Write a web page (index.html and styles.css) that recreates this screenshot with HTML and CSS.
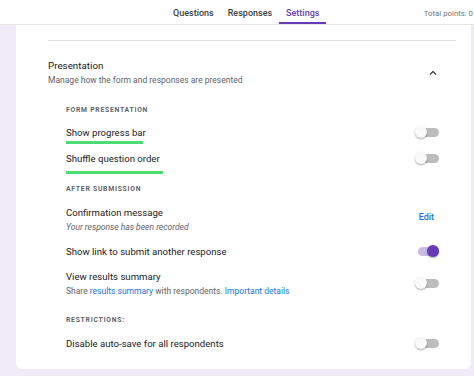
FILE: index.html
```html
<!DOCTYPE html>
<html lang="en">
<head>
    <meta charset="UTF-8">
    <meta name="viewport" content="width=device-width, initial-scale=1.0">
    <title>Form Settings</title>
    <link rel="stylesheet" href="styles.css">
</head>
<body>
    <header class="topbar">
        <nav class="tabs">
            <a class="tab">Questions</a>
            <a class="tab">Responses</a>
            <a class="tab active">Settings</a>
        </nav>
        <span class="points">Total points: 0</span>
    </header>

    <main class="page">
        <div class="card">
            <div class="divider"></div>

            <div class="section-head">
                <div>
                    <div class="section-title">Presentation</div>
                    <div class="section-sub">Manage how the form and responses are presented</div>
                </div>
                <svg class="chevron" viewBox="0 0 24 24" width="14" height="14">
                    <path d="M7.41 15.41L12 10.83l4.59 4.58L18 14l-6-6-6 6z" fill="#202124"/>
                </svg>
            </div>

            <div class="group">
                <div class="group-label first">FORM PRESENTATION</div>
                <div class="row progress-row">
                    <span class="mark mark-1">Show progress bar</span>
                    <span class="switch"></span>
                </div>
                <div class="row">
                    <span class="mark mark-2">Shuffle question order</span>
                    <span class="switch"></span>
                </div>

                <div class="group-label after">AFTER SUBMISSION</div>
                <div class="row tall confirm">
                    <div>
                        <div class="row-title">Confirmation message</div>
                        <div class="row-note italic">Your response has been recorded</div>
                    </div>
                    <a class="edit">Edit</a>
                </div>
                <div class="row link-row">
                    <span>Show link to submit another response</span>
                    <span class="switch on"></span>
                </div>
                <div class="row tall summary">
                    <div>
                        <div class="row-title">View results summary</div>
                        <div class="row-note">Share <a class="link">results summary</a> with respondents. <a class="link">Important details</a></div>
                    </div>
                    <span class="switch"></span>
                </div>

                <div class="group-label restrict">RESTRICTIONS:</div>
                <div class="row last">
                    <span>Disable auto-save for all respondents</span>
                    <span class="switch"></span>
                </div>
            </div>
        </div>
    </main>
</body>
</html>
```

FILE: styles.css
```css
body {
    margin: 0;
    font-family: Roboto, "Liberation Sans", Arial, sans-serif;
    background-color: #f0ebf8;
    color: #202124;
}

.topbar {
    height: 24px;
    background-color: #ffffff;
    border-bottom: 1px solid #e6e6e6;
    display: flex;
    align-items: stretch;
}

.tabs {
    display: flex;
    margin-left: 166px;
}

.tab {
    display: flex;
    align-items: center;
    padding: 3px 7px 0;
    font-size: 9px;
    font-weight: 500;
    color: #3c4043;
    border-bottom: 2px solid transparent;
}

.tab.active {
    color: #673ab7;
    border-bottom-color: #673ab7;
}

.points {
    margin-left: auto;
    padding: 3px 1px 0 0;
    display: flex;
    align-items: center;
    font-size: 7.8px;
    color: #70757a;
}

.page {
    padding: 0 3px 0 16px;
    height: 351px;
}

.card {
    background-color: #ffffff;
    border-radius: 0 0 6px 6px;
    padding: 15px 15px 13px 32px;
}

.divider {
    height: 1px;
    background-color: #e0e0e0;
}

.section-head {
    display: flex;
    align-items: center;
    justify-content: space-between;
    margin-top: 17px;
    padding-right: 16px;
}

.section-title {
    font-size: 9.8px;
    line-height: 16px;
}

.section-sub {
    font-size: 8.5px;
    line-height: 12px;
    color: #5f6368;
}

.chevron {
    margin-top: 2px;
}

.group {
    padding-left: 18px;
    padding-right: 17px;
}

.group-label {
    font-size: 6.8px;
    line-height: 12px;
    font-weight: 700;
    letter-spacing: 0.75px;
    color: #5f6368;
}

.group-label.first { margin-top: 18px; }
.group-label.after { margin-top: 12px; }
.group-label.restrict { margin-top: 17px; }

.row {
    display: flex;
    align-items: center;
    justify-content: space-between;
    height: 26px;
    font-size: 9.6px;
}

.row.progress-row { margin-top: 3px; }
.row.last { margin-top: 4px; }

.row.tall {
    height: auto;
}

.confirm { margin-top: 10px; }
.link-row { margin-top: 5px; }
.summary { margin-top: 5px; }

.row-title {
    font-size: 9.6px;
    line-height: 16px;
}

.row-note {
    font-size: 8.5px;
    line-height: 12px;
    color: #5f6368;
}

.italic {
    font-style: italic;
}

.link,
.edit {
    color: #1a73e8;
}

.edit {
    font-size: 9px;
    font-weight: 500;
    margin-right: 5px;
    margin-bottom: 4px;
}

/* underline markers from the screenshot */
.mark {
    position: relative;
}

.mark::after {
    content: "";
    position: absolute;
    left: 0;
    right: 0;
    height: 3px;
    background-color: #4cdc74;
}

.mark-1::after { bottom: -6px; right: 3px; }
.mark-2::after { bottom: -10px; right: -3px; }

.switch {
    position: relative;
    width: 24px;
    height: 12px;
    flex-shrink: 0;
}

.switch::before {
    content: "";
    position: absolute;
    left: 3px;
    right: 0;
    top: 2px;
    height: 9px;
    border-radius: 5px;
    background-color: #bdbdbd;
}

.switch::after {
    content: "";
    position: absolute;
    left: 0;
    top: 0;
    width: 12px;
    height: 12px;
    border-radius: 50%;
    background-color: #fafafa;
    box-shadow: 0 1px 2px rgba(0, 0, 0, 0.35);
}

.switch.on::before {
    background-color: #c9bbe5;
}

.switch.on::after {
    left: auto;
    right: 0;
    background-color: #673ab7;
}
```
